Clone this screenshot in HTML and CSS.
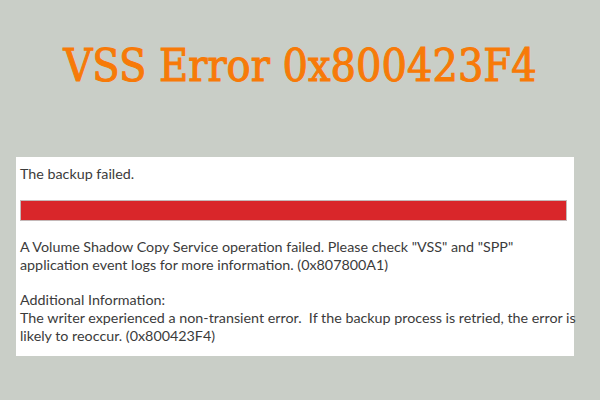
FILE: index.html
```html
<!DOCTYPE html>
<html lang="en">
<head>
    <meta charset="UTF-8">
    <title>VSS Error 0x800423F4</title>
    <link rel="stylesheet" href="styles.css">
</head>
<body>
    <div class="page">
        <h1 class="title">VSS Error 0x800423F4</h1>

        <div class="dialog">
            <p class="status">The backup failed.</p>
            <div class="progress"></div>
            <p class="message">A Volume Shadow Copy Service operation failed. Please check "VSS" and "SPP"<br>application event logs for more information. (0x807800A1)</p>
            <p class="message">Additional Information:<br>The writer experienced a non-transient error.&nbsp; If the backup process is retried, the error is<br>likely to reoccur. (0x800423F4)</p>
        </div>
    </div>
</body>
</html>
```

FILE: styles.css
```css
:root {
    --bg-color: #c9cec7;
    --title-color: #f77a08;
    --card-bg: #ffffff;
    --text-color: #3b3b3b;
    --bar-color: #d9262a;
    --bar-border: #c4b8b8;
}

* {
    box-sizing: border-box;
}

body {
    margin: 0;
    background-color: var(--bg-color);
    font-family: Lato, "Open Sans", sans-serif;
}

.page {
    width: 600px;
    height: 400px;
    padding-top: 40px;
}

.title {
    margin: 0;
    height: 117px;
    font-family: "DejaVu Serif", serif;
    font-stretch: condensed;
    font-weight: normal;
    font-size: 44.5px;
    line-height: 52px;
    text-align: center;
    color: var(--title-color);
    -webkit-text-stroke: 1px var(--title-color);
}

.dialog {
    margin: 0 26px 0 16px;
    padding: 8px 7px 11px 4px;
    background: var(--card-bg);
    color: var(--text-color);
    font-size: 14.3px;
    line-height: 18px;
}

.status {
    margin: 0;
}

.progress {
    height: 21px;
    margin-top: 17px;
    background: var(--bar-color);
    border: 1px solid var(--bar-border);
}

.message {
    margin: 17px 0 0;
    white-space: nowrap;
}
```
